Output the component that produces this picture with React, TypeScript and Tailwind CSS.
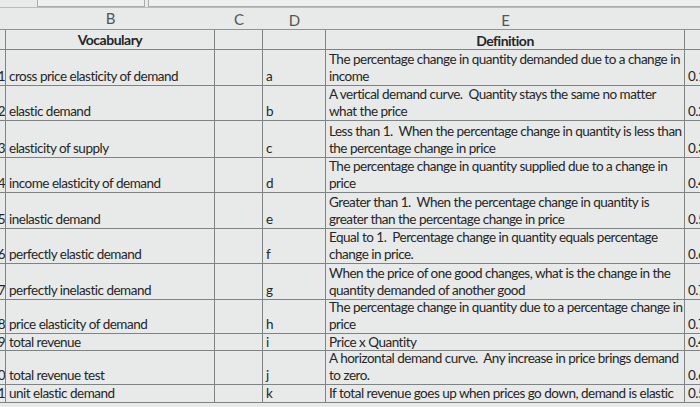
const rows = [
  {
    n: "11",
    term: "cross price elasticity of demand",
    letter: "a",
    def: ["The percentage change in quantity demanded due to a change in", "income"],
    f: "0.15",
    h: "h-[36px]",
  },
  {
    n: "12",
    term: "elastic demand",
    letter: "b",
    def: ["A vertical demand curve.  Quantity stays the same no matter", "what the price"],
    f: "0.24",
    h: "h-[35px]",
  },
  {
    n: "13",
    term: "elasticity of supply",
    letter: "c",
    def: ["Less than 1.  When the percentage change in quantity is less than", "the percentage change in price"],
    f: "0.33",
    h: "h-[37px]",
  },
  {
    n: "14",
    term: "income elasticity of demand",
    letter: "d",
    def: ["The percentage change in quantity supplied due to a change in", "price"],
    f: "0.42",
    h: "h-[35px]",
  },
  {
    n: "15",
    term: "inelastic demand",
    letter: "e",
    def: ["Greater than 1.  When the percentage change in quantity is", "greater than the percentage change in price"],
    f: "0.51",
    h: "h-[36px]",
  },
  {
    n: "16",
    term: "perfectly elastic demand",
    letter: "f",
    def: ["Equal to 1.  Percentage change in quantity equals percentage", "change in price."],
    f: "0.60",
    h: "h-[35px]",
  },
  {
    n: "17",
    term: "perfectly inelastic demand",
    letter: "g",
    def: ["When the price of one good changes, what is the change in the", "quantity demanded of another good"],
    f: "0.72",
    h: "h-[36px]",
  },
  {
    n: "18",
    term: "price elasticity of demand",
    letter: "h",
    def: ["The percentage change in quantity due to a percentage change in", "price"],
    f: "0.78",
    h: "h-[34px]",
  },
  {
    n: "19",
    term: "total revenue",
    letter: "i",
    def: ["Price x Quantity"],
    f: "0.47",
    h: "h-[17px]",
  },
  {
    n: "20",
    term: "total revenue test",
    letter: "j",
    def: ["A horizontal demand curve.  Any increase in price brings demand", "to zero."],
    f: "0.66",
    h: "h-[34px]",
  },
  {
    n: "21",
    term: "unit elastic demand",
    letter: "k",
    def: ["If total revenue goes up when prices go down, demand is elastic"],
    f: "0.59",
    h: "h-[18px]",
  },
];

const cols = "grid grid-cols-[6px_209px_48px_63px_359px_60px]";

export default function App() {
  return (
    <div className="h-[407px] w-[700px] overflow-hidden bg-[#e7eae9] font-['Lato',sans-serif] text-[13.5px] leading-[17px] tracking-[-0.5px] text-[#262626]">
      {/* formula bar remnants */}
      <div className="flex h-[8px] border-b border-[#b9bdbc]">
        <div className="w-[37px]" />
        <div className="w-[108px] border-x border-b border-[#a9adac] bg-[#eef0ef]" />
        <div className="ml-[3px] flex-1 border-l border-b border-[#a9adac] bg-[#eef0ef]" />
      </div>

      {/* column letters */}
      <div className={`${cols} h-[22px] border-b border-[#8f9594] text-[15px] tracking-normal text-[#555]`}>
        <div />
        <div className="flex items-end justify-center pb-[2px]">B</div>
        <div className="flex items-end justify-center pb-[1px]">C</div>
        <div className="flex items-end justify-center">D</div>
        <div className="flex items-end justify-center">E</div>
        <div />
      </div>

      {/* header row */}
      <div className={`${cols} h-[20px] border-b border-[#7d8483]`}>
        <div className="border-r border-[#7d8483]" />
        <div className="flex items-end justify-center border-r border-[#7d8483] pb-[1px] text-[14px] font-bold">
          Vocabulary
        </div>
        <div className="border-r border-[#7d8483]" />
        <div className="border-r border-[#7d8483]" />
        <div className="flex items-end justify-center border-r border-[#7d8483] text-[14px] font-bold">
          Definition
        </div>
        <div />
      </div>

      {rows.map((row) => (
        <div key={row.n} className={`${cols} ${row.h} border-b border-[#7d8483]`}>
          <div className="flex items-end justify-end overflow-hidden border-r border-[#7d8483]">
            <span className="shrink-0">{row.n}</span>
          </div>
          <div className="flex items-end overflow-hidden whitespace-pre border-r border-[#7d8483] pl-[3px]">
            {row.term}
          </div>
          <div className="border-r border-[#7d8483]" />
          <div className="flex items-end border-r border-[#7d8483] pl-[3px]">{row.letter}</div>
          <div className="flex flex-col justify-end overflow-hidden whitespace-pre border-r border-[#7d8483] pl-[3px]">
            {row.def.map((line) => (
              <div key={line}>{line}</div>
            ))}
          </div>
          <div className="flex items-end whitespace-pre pl-[3px]">{row.f}</div>
        </div>
      ))}
    </div>
  );
}
